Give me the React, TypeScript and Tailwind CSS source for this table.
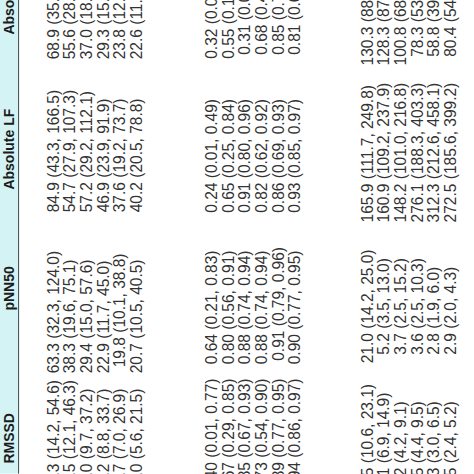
import React from "react";

const c0 = "w-[100px]";
const c1 = "w-[155px]";
const c2 = "w-[150px]";
const c3 = "w-[150px]";

function Cell({ num, rest, width, numW }: { num: string; rest: string; width: string; numW: string }) {
  return (
    <div className={`flex shrink-0 ${width}`}>
      <span className={`flex shrink-0 justify-end ${numW}`}>{num}</span>
      <span className="whitespace-pre">{" " + rest}</span>
    </div>
  );
}

type C = [string, string] | [string, string, string];

type Group = {
  mt: string;
  w: [string, string, string, string];
  rows: C[][];
};

const groups: Group[] = [
  {
    mt: "mt-[24.8px]",
    w: ["w-[10px]", "w-[30.5px]", "w-[36.5px]", "w-[39.5px]"],
    rows: [
      [["28.3", "(14.2, 54.6)"], ["63.3", "(32.3, 124.0)"], ["84.9", "(43.3, 166.5)"], ["68.9", "(35.2, 134.9)"]],
      [["22.5", "(12.1, 46.3)"], ["38.3", "(19.6, 75.1)"], ["54.7", "(27.9, 107.3)"], ["55.6", "(28.4, 108.9)"]],
      [["18.0", "(9.7, 37.2)"], ["29.4", "(15.0, 57.6)"], ["57.2", "(29.2, 112.1)"], ["37.0", "(18.9, 72.5)"]],
      [["16.2", "(8.8, 33.7)"], ["22.9", "(11.7, 45.0)"], ["46.9", "(23.9, 91.9)"], ["29.3", "(15.0, 57.4)"]],
      [["13.7", "(7.0, 26.9)"], ["19.8", "(10.1, 38.8)", "w-[36.5px]"], ["37.6", "(19.2, 73.7)"], ["23.8", "(12.2, 46.6)"]],
      [["11.0", "(5.6, 21.5)"], ["20.7", "(10.5, 40.5)"], ["40.2", "(20.5, 78.8)"], ["22.6", "(11.5, 44.3)"]],
    ],
  },
  {
    mt: "mt-[55.3px]",
    w: ["w-[11.5px]", "w-[39.5px]", "w-[36px]", "w-[40px]"],
    rows: [
      [["0.40", "(0.01, 0.77)"], ["0.64", "(0.21, 0.83)"], ["0.24", "(0.01, 0.49)"], ["0.32", "(0.02, 0.61)"]],
      [["0.67", "(0.29, 0.85)"], ["0.80", "(0.56, 0.91)"], ["0.65", "(0.25, 0.84)"], ["0.55", "(0.18, 0.80)"]],
      [["0.85", "(0.67, 0.93)"], ["0.88", "(0.74, 0.94)"], ["0.91", "(0.80, 0.96)"], ["0.31", "(0.02, 0.62)", "w-[44px]"]],
      [["0.73", "(0.54, 0.90)"], ["0.88", "(0.74, 0.94)"], ["0.82", "(0.62, 0.92)"], ["0.68", "(0.41, 0.86)", "w-[44px]"]],
      [["0.89", "(0.77, 0.95)"], ["0.91", "(0.79, 0.96)", "w-[43px]"], ["0.86", "(0.69, 0.93)"], ["0.85", "(0.71, 0.93)", "w-[44px]"]],
      [["0.94", "(0.86, 0.97)"], ["0.90", "(0.77, 0.95)"], ["0.93", "(0.85, 0.97)"], ["0.81", "(0.63, 0.91)", "w-[44px]"]],
    ],
  },
  {
    mt: "mt-[52.7px]",
    w: ["w-[6px]", "w-[40.5px]", "w-[35px]", "w-[42px]"],
    rows: [
      [["15.5", "(10.6, 23.1)"], ["21.0", "(14.2, 25.0)"], ["165.9", "(111.7, 249.8)"], ["130.3", "(88.4, 192.1)"]],
      [["10.1", "(6.9, 14.9)"], ["5.2", "(3.5, 13.0)"], ["160.9", "(109.2, 237.9)"], ["128.3", "(87.2, 188.9)"]],
      [["6.2", "(4.2, 9.1)"], ["3.7", "(2.5, 15.2)"], ["148.2", "(101.0, 216.8)"], ["100.8", "(68.5, 148.4)"]],
      [["6.5", "(4.4, 9.5)"], ["3.6", "(2.5, 10.3)"], ["276.1", "(188.3, 403.3)"], ["78.3", "(53.2, 115.3)"]],
      [["4.3", "(3.0, 6.5)"], ["2.8", "(1.9, 6.0)"], ["312.3", "(212.6, 458.1)"], ["58.8", "(39.9, 86.6)"]],
      [["3.5", "(2.4, 5.2)"], ["2.9", "(2.0, 4.3)"], ["272.5", "(185.6, 399.2)"], ["80.4", "(54.6, 118.4)"]],
    ],
  },
];

const widths = [c0, c1, c2, c3];

export default function App() {
  return (
    <div className="w-[474px] h-[474px] overflow-hidden bg-white font-['Liberation_Sans',Arial,sans-serif] text-[#333]">
      <div className="w-[474px] h-[447.17px] mt-[13.4px] -rotate-90 scale-y-[1.06]">
        {/* header row */}
        <div className="flex h-[17.93px] bg-[#d4f3f5] border-b-[1.9px] border-[#4d5557] text-[14px] leading-[16px] font-bold text-[#1c1c1c] whitespace-nowrap">
          <div className={`shrink-0 ${c0} pl-[10px]`}>RMSSD</div>
          <div className={`shrink-0 ${c1} pl-[63px]`}>pNN50</div>
          <div className={`shrink-0 ${c2} pl-[29px]`}>Absolute LF</div>
          <div className={`shrink-0 ${c3} pl-[34px]`}>Absolute HF</div>
        </div>
        {groups.map((g, gi) => (
          <div key={gi} className={`flex flex-col ${g.mt}`}>
            {g.rows.map((r, ri) => (
              <div key={ri} className="flex h-[15.66px] text-[15.5px] leading-[15.66px] whitespace-nowrap">
                {r.map((c, ci) => (
                  <Cell key={ci} num={c[0]} rest={c[1]} width={widths[ci]} numW={c[2] ?? g.w[ci]} />
                ))}
              </div>
            ))}
          </div>
        ))}
      </div>
    </div>
  );
}
